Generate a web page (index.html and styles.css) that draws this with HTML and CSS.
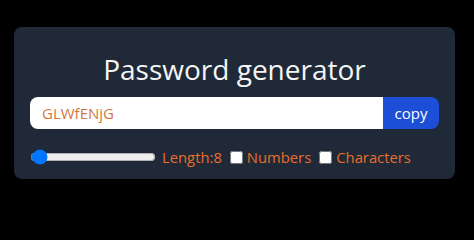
FILE: index.html
```html
<!DOCTYPE html>
<html lang="en">
<head>
<meta charset="utf-8">
<title>Password generator</title>
<link rel="stylesheet" href="styles.css">
</head>
<body>
<div class="card">
  <h1 class="title">Password generator</h1>
  <div class="field">
    <input class="password" type="text" value="GLWfENjG" readonly>
    <button class="copy">copy</button>
  </div>
  <div class="controls">
    <div class="group">
      <input class="range" type="range" min="6" max="100" value="8">
      <label class="label">Length:8</label>
    </div>
    <div class="group">
      <input class="check" type="checkbox" id="num">
      <label class="label" for="num">Numbers</label>
    </div>
    <div class="group">
      <input class="check" type="checkbox" id="chr">
      <label class="label" for="chr">Characters</label>
    </div>
  </div>
</div>
</body>
</html>
```

FILE: styles.css
```css
html, body {
  margin: 0;
  padding: 0;
  background: #000;
}
body {
  font-family: "Open Sans", "Noto Sans", sans-serif;
}
.card {
  box-sizing: border-box;
  width: 441px;
  height: 152px;
  margin: 27px 0 0 14px;
  padding: 0 16px;
  background: #1f2937;
  border-radius: 8px;
  color: #ea6d2a;
  overflow: hidden;
}
.title {
  margin: 0;
  padding-top: 22px;
  height: 48px;
  line-height: 40px;
  font-size: 28px;
  font-weight: 400;
  color: #f5f5f5;
  text-align: center;
}
.field {
  display: flex;
  height: 32px;
  border-radius: 8px;
  overflow: hidden;
}
.password {
  flex: 1;
  min-width: 0;
  border: none;
  outline: none;
  margin: 0;
  padding: 0 12px;
  font-family: inherit;
  font-size: 15px;
  color: #d4773f;
  background: #fff;
}
.copy {
  flex-shrink: 0;
  width: 56px;
  border: none;
  margin: 0;
  padding: 0;
  background: #1d4ed8;
  color: #fff;
  font-family: inherit;
  font-size: 15px;
}
.controls {
  display: flex;
  align-items: center;
  gap: 8px;
  margin-top: 16px;
  height: 24px;
  font-size: 14.8px;
}
.group {
  display: flex;
  align-items: center;
}
.range {
  width: 126px;
  margin: 0 6px 0 0;
}
.check {
  width: 13px;
  height: 13px;
  margin: 0 4px 0 0;
}
.label {
  line-height: 20px;
}
```
